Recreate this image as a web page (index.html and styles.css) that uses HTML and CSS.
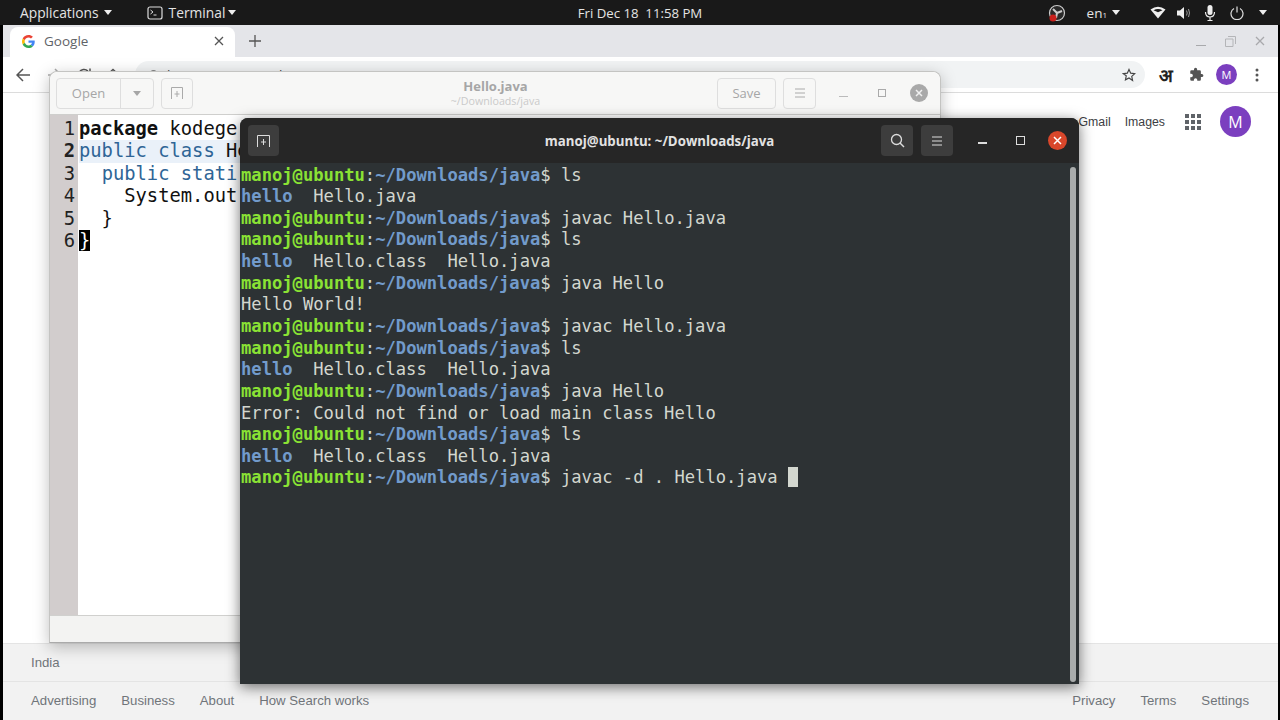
FILE: index.html
```html
<!DOCTYPE html>
<html>
  <head>
    <link rel="stylesheet" href="styles.css">
    <title>Desktop</title>
  </head>
  <body>
    <div class="topbar">
      <div class="topbar-left">
        <span class="menu-item">Applications <i class="caret"></i></span>
        <span class="menu-item terminal-menu">
          <svg width="16" height="14" viewBox="0 0 16 14"><rect x="1" y="1" width="14" height="12" rx="2" fill="none" stroke="#ddd" stroke-width="1.2"/><path d="M3.5 4l2.5 2-2.5 2M6.5 9h3" fill="none" stroke="#ddd"/></svg>
          Terminal <i class="caret terminal-caret"></i>
        </span>
      </div>
      <div class="clock">Fri Dec 18&nbsp; 11:58 PM</div>
      <div class="tray">
        <svg class="tray-obs" width="18" height="18" viewBox="0 0 18 18"><circle cx="9" cy="9" r="7.5" fill="#2a2a2a" stroke="#ccc" stroke-width="1.2"/><path d="M9 9L5 5M9 9l5-2M9 9l-1 5" stroke="#ccc" stroke-width="2"/><circle cx="5" cy="14" r="3.5" fill="#c8201c"/></svg>
        <span class="lang">en<sub>1</sub></span>
        <i class="caret lang-caret"></i>
        <svg class="tray-wifi" width="16" height="13" viewBox="0 0 16 13"><path d="M0.5 3.5Q8 -2 15.5 3.5L8 12.5Z" fill="#eee"/><path d="M3.5 4.2Q8 1.8 12.5 4.2L8 6.2Z" fill="#1a1a1a"/></svg>
        <svg class="tray-sound" width="15" height="14" viewBox="0 0 15 14"><path d="M1 4.5h3L8 1v12L4 9.5H1z" fill="#eee"/><path d="M10.5 4.5q1.5 2.500 0 5M12.500 3q2 4 0 8" fill="none" stroke="#999" stroke-width="1"/></svg>
        <svg class="tray-mic" width="12" height="18" viewBox="0 0 12 18"><rect x="3.500" y="1" width="5" height="10" rx="2.500" fill="#eee"/><path d="M1.500 8q0 5 4.500 5t4.500-5M6 13v3M3.500 16.500h5" fill="none" stroke="#eee" stroke-width="1.2"/></svg>
        <svg class="tray-power" width="14" height="14" viewBox="0 0 14 14"><path d="M4 2.500a6 6 0 1 0 6 0M7 0.500v6" fill="none" stroke="#ddd" stroke-width="1.200"/></svg>
        <i class="caret power-caret"></i>
      </div>
    </div>

    <div class="chrome">
      <div class="tabstrip">
        <div class="tab">
          <svg width="13" height="13" viewBox="0 0 48 48"><path fill="#ea4335" d="M24 9.500c3.500 0 6.700 1.200 9.200 3.600l6.900-6.900C35.900 2.400 30.500 0 24 0 14.600 0 6.500 5.400 2.600 13.200l8 6.200C12.500 13.700 17.800 9.500 24 9.500z"/><path fill="#4285f4" d="M47 24.500c0-1.600-.2-3.100-.4-4.500H24v9h13c-.6 3-2.300 5.500-4.800 7.200l7.700 6C44.400 37.900 47 31.800 47 24.500z"/><path fill="#fbbc05" d="M10.600 28.600c-.5-1.400-.8-3-.8-4.600s.3-3.200.8-4.600l-8-6.200C.9 16.500 0 20.100 0 24s.9 7.500 2.600 10.800l8-6.200z"/><path fill="#34a853" d="M24 48c6.500 0 11.900-2.100 15.900-5.800l-7.700-6c-2.200 1.400-4.900 2.300-8.200 2.300-6.200 0-11.500-4.200-13.400-9.900l-8 6.200C6.500 42.600 14.600 48 24 48z"/></svg>
          <span class="tab-title">Google</span>
          <svg class="tab-close" width="10" height="10" viewBox="0 0 10 10"><path d="M1 1l8 8M9 1l-8 8" stroke="#555" stroke-width="1.300"/></svg>
        </div>
        <svg class="new-tab" width="12" height="12" viewBox="0 0 12 12"><path d="M6 0v12M0 6h12" stroke="#555" stroke-width="1.300"/></svg>
        <div class="win-controls">
          <span class="win-min"></span>
          <svg width="11" height="11" viewBox="0 0 11 11"><path d="M3 .5h7.500V8M.5 3h7.500v7.500H.5z" fill="none" stroke="#b4b5b8"/></svg>
          <svg width="10" height="10" viewBox="0 0 10 10"><path d="M1 1l8 8M9 1l-8 8" stroke="#a8a9ac" stroke-width="1.300"/></svg>
        </div>
      </div>
      <div class="toolbar">
        <svg class="nav-icon" width="14" height="14" viewBox="0 0 14 14"><path d="M14 7H1.500M7 1L1 7l6 6" fill="none" stroke="#555" stroke-width="1.500"/></svg>
        <svg class="nav-icon nav-forward" width="14" height="14" viewBox="0 0 14 14"><path d="M0 7h12.500M7 1l6 6-6 6" fill="none" stroke="#aaa" stroke-width="1.500"/></svg>
        <svg class="nav-icon nav-reload" width="14" height="14" viewBox="0 0 14 14"><path d="M12.500 7a5.500 5.500 0 1 1-1.600-3.900M13 .5v4h-4" fill="none" stroke="#555" stroke-width="1.500"/></svg>
        <svg class="nav-icon nav-home" width="14" height="14" viewBox="0 0 14 14"><path d="M1 7l6-5.500L13 7M3 6v7h8V6" fill="none" stroke="#555" stroke-width="1.500"/></svg>
        <div class="omnibox">
          <span class="lock"></span>
          <span class="url">https://www.google.com</span>
          <svg class="star" width="14" height="14" viewBox="0 0 24 24"><path d="M12 2.500l2.900 6.400 7 .8-5.200 4.700 1.400 6.900L12 17l-6.100 3.300 1.400-6.900L2.100 9.700l7-.8z" fill="none" stroke="#444" stroke-width="2"/></svg>
        </div>
        <span class="hindi">अ</span>
        <svg class="puzzle" width="15" height="15" viewBox="0 0 24 24"><path d="M20.500 11H19V7a2 2 0 0 0-2-2h-4V3.500a2.500 2.500 0 0 0-5 0V5H4a2 2 0 0 0-2 2v3.800h1.500a2.700 2.700 0 0 1 0 5.400H2V20a2 2 0 0 0 2 2h3.800v-1.500a2.700 2.700 0 0 1 5.400 0V22H17a2 2 0 0 0 2-2v-4h1.500a2.500 2.500 0 0 0 0-5z" fill="#555"/></svg>
        <span class="avatar avatar-small">M</span>
        <svg class="dots" width="4" height="14" viewBox="0 0 4 14"><circle cx="2" cy="2" r="1.500" fill="#555"/><circle cx="2" cy="7" r="1.500" fill="#555"/><circle cx="2" cy="12" r="1.500" fill="#555"/></svg>
      </div>
      <div class="page">
        <div class="page-links">
          <span>Gmail</span>
          <span>Images</span>
          <div class="apps-grid"><i></i><i></i><i></i><i></i><i></i><i></i><i></i><i></i><i></i></div>
          <span class="avatar avatar-big">M</span>
        </div>
      </div>
      <div class="footer">
        <div class="footer-country">India</div>
        <div class="footer-links">
          <div class="footer-group">
            <span>Advertising</span>
            <span>Business</span>
            <span>About</span>
            <span>How Search works</span>
          </div>
          <div class="footer-group">
            <span>Privacy</span>
            <span>Terms</span>
            <span>Settings</span>
          </div>
        </div>
      </div>
    </div>

    <div class="gedit">
      <div class="gedit-header">
        <div class="open-group">
          <span class="open-btn">Open</span>
          <span class="open-arrow"><i class="caret gray-caret"></i></span>
        </div>
        <span class="gedit-btn gedit-newtab">
          <svg width="14" height="14" viewBox="0 0 14 14"><path d="M1.500 13V1.500h11V13M7 5v6M4.500 8h5" fill="none" stroke="#aaa"/></svg>
        </span>
        <div class="gedit-title">
          <div class="gedit-name">Hello.java</div>
          <div class="gedit-path">~/Downloads/java</div>
        </div>
        <span class="gedit-btn save-btn">Save</span>
        <span class="gedit-btn gedit-menu">
          <svg width="12" height="10" viewBox="0 0 12 10"><path d="M1 1h10M1 5h10M1 9h10" stroke="#aaa"/></svg>
        </span>
        <span class="gedit-min"></span>
        <span class="gedit-max"></span>
        <span class="gedit-close">
          <svg width="8" height="8" viewBox="0 0 8 8"><path d="M1 1l6 6M7 1L1 7" stroke="#f0f0f0" stroke-width="1.500"/></svg>
        </span>
      </div>
      <div class="gedit-body">
        <div class="gutter">
          <div>1</div>
          <div class="gutter-current">2</div>
          <div>3</div>
          <div>4</div>
          <div>5</div>
          <div>6</div>
        </div>
        <div class="code">
          <div><b>package</b> kodege</div>
          <div class="code-current"><span class="kw">public class</span> He</div>
          <div>  <span class="kw">public stati</span></div>
          <div>    System.out</div>
          <div>  }</div>
          <div><span class="code-cursor">}</span></div>
        </div>
      </div>
      <div class="gedit-status"></div>
    </div>

    <div class="terminal">
      <div class="term-header">
        <span class="term-btn term-newtab">
          <svg width="15" height="14" viewBox="0 0 15 14"><path d="M1.500 13V1.500h12V13M7.500 5v6M5 8h5" fill="none" stroke="#ddd"/></svg>
        </span>
        <div class="term-title">manoj@ubuntu: ~/Downloads/java</div>
        <span class="term-btn">
          <svg width="15" height="15" viewBox="0 0 15 15"><circle cx="6.500" cy="6.500" r="5" fill="none" stroke="#ddd" stroke-width="1.300"/><path d="M10 10l4 4" stroke="#ddd" stroke-width="1.500"/></svg>
        </span>
        <span class="term-btn">
          <svg width="12" height="10" viewBox="0 0 12 10"><path d="M1 1h10M1 5h10M1 9h10" stroke="#ddd" stroke-width="1.200"/></svg>
        </span>
        <span class="term-min"></span>
        <span class="term-max"></span>
        <span class="term-close">
          <svg width="9" height="9" viewBox="0 0 9 9"><path d="M1 1l7 7M8 1L1 8" stroke="#fff" stroke-width="1.500"/></svg>
        </span>
      </div>
      <div class="term-body">
        <div class="term-text">
          <div><b class="user">manoj@ubuntu</b>:<b class="path">~/Downloads/java</b>$ ls</div>
          <div><b class="path">hello</b>  Hello.java</div>
          <div><b class="user">manoj@ubuntu</b>:<b class="path">~/Downloads/java</b>$ javac Hello.java</div>
          <div><b class="user">manoj@ubuntu</b>:<b class="path">~/Downloads/java</b>$ ls</div>
          <div><b class="path">hello</b>  Hello.class  Hello.java</div>
          <div><b class="user">manoj@ubuntu</b>:<b class="path">~/Downloads/java</b>$ java Hello</div>
          <div>Hello World!</div>
          <div><b class="user">manoj@ubuntu</b>:<b class="path">~/Downloads/java</b>$ javac Hello.java</div>
          <div><b class="user">manoj@ubuntu</b>:<b class="path">~/Downloads/java</b>$ ls</div>
          <div><b class="path">hello</b>  Hello.class  Hello.java</div>
          <div><b class="user">manoj@ubuntu</b>:<b class="path">~/Downloads/java</b>$ java Hello</div>
          <div>Error: Could not find or load main class Hello</div>
          <div><b class="user">manoj@ubuntu</b>:<b class="path">~/Downloads/java</b>$ ls</div>
          <div><b class="path">hello</b>  Hello.class  Hello.java</div>
          <div><b class="user">manoj@ubuntu</b>:<b class="path">~/Downloads/java</b>$ javac -d . Hello.java <span class="term-cursor"></span></div>
        </div>
        <div class="scrollbar"></div>
      </div>
    </div>
  </body>
</html>
```

FILE: styles.css
```css
* {
  box-sizing: border-box;
}
html,
body {
  height: 100%;
}
body {
  margin: 0;
  width: 1280px;
  height: 720px;
  overflow: hidden;
  background-color: #000;
  font-family: "Open Sans", "Noto Sans", sans-serif;
  display: flex;
  flex-direction: column;
}

.caret {
  display: inline-block;
  width: 0;
  height: 0;
  border-left: 4.5px solid transparent;
  border-right: 4.5px solid transparent;
  border-top: 5px solid #eee;
}

/* gnome top bar */
.topbar {
  height: 25px;
  flex: none;
  background-color: #191919;
  color: #e4e4e4;
  font-size: 13.8px;
  display: grid;
  grid-template-columns: 1fr auto 1fr;
  align-items: center;
  padding: 0 20px;
}
.topbar-left {
  display: flex;
  align-items: center;
  gap: 35px;
}
.menu-item {
  display: flex;
  align-items: center;
  gap: 5px;
}
.terminal-menu svg {
  margin-right: 1px;
}
.terminal-caret {
  margin-left: -2px;
}
.clock {
  font-size: 13.2px;
}
.tray {
  display: flex;
  align-items: center;
  justify-content: flex-end;
  margin-right: -7px;
}
.tray-obs {
  margin-right: 21px;
}
.lang {
  font-size: 13.5px;
  margin-right: 5px;
}
.lang sub {
  font-size: 8px;
  line-height: 0;
  vertical-align: baseline;
}
.tray-wifi {
  margin-left: 30px;
}
.tray-sound {
  margin-left: 10px;
}
.tray-mic {
  margin-left: 13px;
}
.tray-power {
  margin-left: 14px;
}
.power-caret {
  margin-left: 15px;
}

/* chrome window */
.chrome {
  flex: 1;
  margin: 0 2px 0 3px;
  background-color: #fff;
  display: flex;
  flex-direction: column;
  min-height: 0;
}
.tabstrip {
  height: 32px;
  flex: none;
  background-color: #e4e5e9;
  display: flex;
  align-items: flex-end;
  padding-left: 7px;
}
.tab {
  width: 225px;
  height: 30px;
  background-color: #fff;
  border-radius: 8px 8px 0 0;
  display: flex;
  align-items: center;
  padding: 0 11px 2px 12px;
  color: #5f6368;
  font-size: 13.5px;
}
.tab-title {
  flex: 1;
  margin-left: 9px;
}
.new-tab {
  margin: 0 0 10px 14px;
}
.win-controls {
  margin-left: auto;
  height: 32px;
  display: flex;
  align-items: center;
  gap: 19px;
  padding-right: 13px;
}
.win-min {
  width: 10px;
  height: 1px;
  margin-top: 8px;
  background-color: #a8a9ac;
}
.toolbar {
  height: 36px;
  flex: none;
  border-bottom: 1px solid #dcdcdc;
  display: flex;
  align-items: center;
  padding: 0 14px 0 13px;
}
.nav-forward {
  margin-left: 18px;
}
.nav-reload,
.nav-home {
  margin-left: 15px;
}
.omnibox {
  margin-left: 15px;
  width: 1010px;
  height: 27px;
  border-radius: 14px;
  background-color: #f1f3f4;
  display: flex;
  align-items: center;
  padding: 0 9px 0 14px;
  font-size: 13.5px;
  color: #444;
}
.lock {
  width: 9px;
  height: 9px;
  margin-right: 9px;
  border: 1px solid #666;
  border-radius: 50%;
}
.star {
  margin-left: auto;
}
.hindi {
  margin-left: 14px;
  margin-right: 15px;
  font-family: "DejaVu Sans", sans-serif;
  font-size: 18px;
  font-weight: bold;
  color: #222;
}
.puzzle {
  margin-left: 1px;
}
.avatar {
  display: flex;
  align-items: center;
  justify-content: center;
  border-radius: 50%;
  background-color: #7b3fbf;
  color: #fff;
}
.avatar-small {
  width: 21px;
  height: 21px;
  font-size: 11px;
  margin-left: 12px;
}
.dots {
  margin-left: 18px;
}
.page {
  flex: 1;
  min-height: 0;
}
.page-links {
  display: flex;
  align-items: center;
  justify-content: flex-end;
  gap: 14px;
  padding: 13px 27px 0 0;
  font-family: "Liberation Sans", sans-serif;
  font-size: 12.3px;
  color: #3c4043;
}
.apps-grid {
  display: grid;
  grid-template-columns: repeat(3, 4px);
  gap: 2px;
  margin: 0 5px 0 6px;
}
.apps-grid i {
  width: 4px;
  height: 4px;
  background-color: #5f6368;
}
.avatar-big {
  width: 31px;
  height: 31px;
  font-size: 16px;
  font-family: "Open Sans", sans-serif;
}
.footer {
  height: 77px;
  flex: none;
  background-color: #f2f2f2;
  border-top: 1px solid #e4e4e4;
  font-family: "Liberation Sans", sans-serif;
  font-size: 13.2px;
  color: #70757a;
}
.footer-country {
  height: 38px;
  padding: 11px 0 0 28px;
  border-bottom: 1px solid #e4e4e4;
}
.footer-links {
  display: flex;
  justify-content: space-between;
  padding: 11px 29px 0 28px;
}
.footer-group {
  display: flex;
  gap: 25px;
}

/* gedit window */
.gedit {
  position: absolute;
  left: 49px;
  top: 71px;
  width: 892px;
  height: 572px;
  background-color: #fff;
  border: 1px solid #c4c4c2;
  border-bottom-color: #aaa;
  border-radius: 8px 8px 0 0;
  box-shadow: 0 4px 16px rgba(0, 0, 0, 0.25);
  display: flex;
  flex-direction: column;
}
.gedit-header {
  height: 43px;
  flex: none;
  background-color: #f7f7f6;
  border-bottom: 1px solid #cfcfcd;
  border-radius: 8px 8px 0 0;
  display: flex;
  align-items: center;
  padding: 0 12px 0 6px;
  color: #a6a6a6;
  font-size: 13px;
}
.open-group {
  display: flex;
  height: 31px;
  border: 1px solid #dedede;
  border-radius: 4px;
}
.open-btn {
  width: 64px;
  display: flex;
  align-items: center;
  justify-content: center;
  border-right: 1px solid #dedede;
}
.open-arrow {
  width: 32px;
  display: flex;
  align-items: center;
  justify-content: center;
}
.gray-caret {
  border-top-color: #a6a6a6;
}
.gedit-btn {
  height: 31px;
  border: 1px solid #dedede;
  border-radius: 4px;
  display: flex;
  align-items: center;
  justify-content: center;
}
.gedit-newtab {
  width: 32px;
  margin-left: 7px;
}
.gedit-title {
  flex: 1;
  text-align: center;
  padding-left: 81px;
}
.gedit-name {
  font-weight: bold;
  font-size: 13px;
  line-height: 15px;
}
.gedit-path {
  font-size: 10.7px;
  line-height: 14px;
  color: #cacaca;
}
.save-btn {
  width: 59px;
}
.gedit-menu {
  width: 33px;
  margin-left: 7px;
}
.gedit-min {
  width: 9px;
  height: 1px;
  margin: 6px 0 0 23px;
  background-color: #bbb;
}
.gedit-max {
  width: 8px;
  height: 8px;
  margin-left: 30px;
  border: 1px solid #aaa;
}
.gedit-close {
  width: 18px;
  height: 18px;
  margin-left: 24px;
  border-radius: 50%;
  background-color: #a9a9a9;
  display: flex;
  align-items: center;
  justify-content: center;
}
.gedit-body {
  flex: 1;
  min-height: 0;
  display: flex;
  font-family: "DejaVu Sans Mono", monospace;
  font-size: 18.8px;
  line-height: 22.4px;
  color: #111;
}
.gutter {
  width: 28px;
  flex: none;
  background-color: #d2cdcd;
  text-align: right;
  padding: 3px 3px 0 0;
  color: #222;
}
.gutter-current {
  font-weight: bold;
}
.code {
  flex: 1;
  padding: 3px 0 0 1px;
}
.code div {
  white-space: pre;
}
.code-current {
  background-color: #eaf1f9;
}
.kw {
  color: #2f6596;
}
.code-cursor {
  background-color: #000;
  color: #fff;
}
.gedit-status {
  height: 27px;
  flex: none;
  background-color: #f3f3f2;
  border-top: 1px solid #d0d0ce;
}

/* terminal window */
.terminal {
  position: absolute;
  left: 240px;
  top: 118px;
  width: 839px;
  height: 566px;
  background-color: #2d3234;
  border-radius: 8px 8px 0 0;
  box-shadow: 0 3px 14px rgba(0, 0, 0, 0.55);
  display: flex;
  flex-direction: column;
}
.term-header {
  height: 45px;
  flex: none;
  background-color: #262626;
  border-radius: 8px 8px 0 0;
  display: flex;
  align-items: center;
  gap: 8px;
  padding: 0 12.5px 0 8px;
}
.term-btn {
  width: 32px;
  height: 31px;
  border-radius: 4px;
  background-color: #3d3d3d;
  display: flex;
  align-items: center;
  justify-content: center;
}
.term-newtab {
  width: 31px;
}
.term-title {
  flex: 1;
  text-align: center;
  color: #e2e2e2;
  font-weight: bold;
  font-size: 13.25px;
  padding-left: 159px;
}
.term-min {
  width: 9px;
  height: 2px;
  margin: 4px 0 0 16.5px;
  background-color: #ddd;
}
.term-max {
  width: 9px;
  height: 9px;
  margin-left: 21px;
  border: 1.5px solid #ddd;
}
.term-close {
  width: 19px;
  height: 19px;
  margin-left: 15px;
  border-radius: 50%;
  background-color: #d9472b;
  display: flex;
  align-items: center;
  justify-content: center;
}
.term-body {
  flex: 1;
  min-height: 0;
  display: flex;
  justify-content: space-between;
  padding: 1.5px 3px 2px 1px;
}
.term-text {
  font-family: "DejaVu Sans Mono", monospace;
  font-size: 17.15px;
  line-height: 21.64px;
  color: #d3d7cf;
}
.term-text div {
  white-space: pre;
}
.user {
  color: #8ae234;
}
.path {
  color: #729bcb;
}
.term-cursor {
  display: inline-block;
  width: 10px;
  height: 20px;
  vertical-align: text-bottom;
  background-color: #d3d7cf;
}
.scrollbar {
  width: 6px;
  margin-top: 2px;
  border-radius: 3px;
  background-color: #a9acac;
}
```
